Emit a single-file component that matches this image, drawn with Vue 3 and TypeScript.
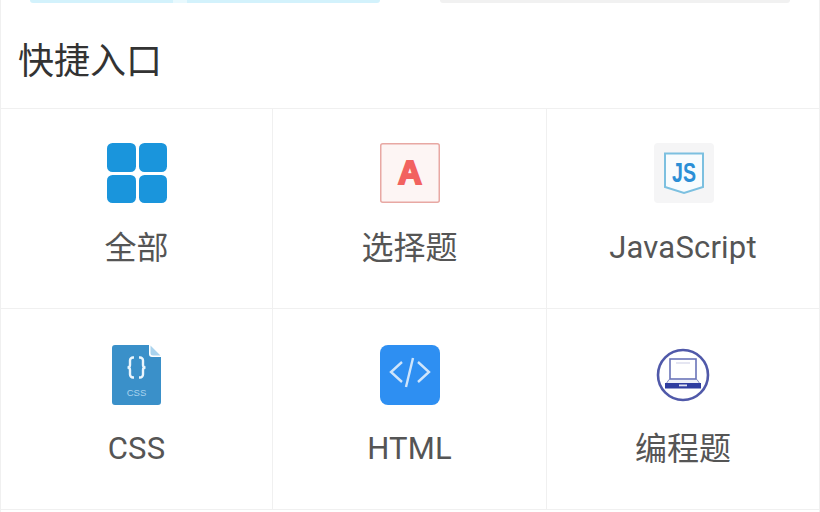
<script setup lang="ts">
const cells = ['全部', '选择题', 'JavaScript', 'CSS', 'HTML', '编程题']
const isLatin = (s: string): boolean => /^[A-Za-z]+$/.test(s)
</script>

<template>
  <div class="page">
    <div class="banners">
      <div class="pill blue"></div>
      <div class="pill gray"></div>
    </div>
    <h2 class="title">快捷入口</h2>
    <div class="grid">
      <div v-for="(label, i) in cells" :key="label" class="cell">
        <div class="icon">
          <svg v-if="i === 0" width="60" height="60" viewBox="0 0 60 60">
            <rect x="0" y="0" width="29" height="29" rx="5.5" fill="#1a95dc" />
            <rect x="32" y="0" width="28" height="29" rx="5.5" fill="#1a95dc" />
            <rect x="0" y="32" width="29" height="28" rx="5.5" fill="#1a95dc" />
            <rect x="32" y="32" width="28" height="28" rx="5.5" fill="#1a95dc" />
          </svg>
          <svg v-else-if="i === 1" width="60" height="60" viewBox="0 0 60 60">
            <rect x="0.75" y="0.75" width="58.5" height="58.5" rx="2" fill="#fdf5f4" stroke="#e8a8a3" stroke-width="1.5" />
            <text x="30" y="41" text-anchor="middle" class="a-letter">A</text>
          </svg>
          <svg v-else-if="i === 2" class="js-icon" width="60" height="60" viewBox="0 0 60 60">
            <rect width="60" height="60" rx="4" fill="#f5f5f6" />
            <path d="M11 10.5H49V44L30 50L11 44Z" fill="#f8fcfe" stroke="#7cc0e0" stroke-width="2" />
            <text transform="translate(30 39) scale(0.7 1)" text-anchor="middle" class="js-letter">JS</text>
          </svg>
          <svg v-else-if="i === 3" width="50" height="60" viewBox="0 0 50 60">
            <path d="M3 0H37V9a3 3 0 0 0 3 3H49V57a3 3 0 0 1-3 3H3a3 3 0 0 1-3-3V3a3 3 0 0 1 3-3Z" fill="#3a90c9" />
            <path d="M38.5 0.5L48.5 10.5H41a2.5 2.5 0 0 1-2.5-2.5Z" fill="#a9d3ee" />
            <path d="M22 12.5h-1a3 3 0 0 0-3 3v4.5a2.5 2.5 0 0 1-2.5 2.5a2.5 2.5 0 0 1 2.5 2.5v4.5a3 3 0 0 0 3 3h1" fill="none" stroke="#eaf5fc" stroke-width="2.4" />
            <path d="M27 12.5h1a3 3 0 0 1 3 3v4.5a2.5 2.5 0 0 0 2.5 2.5a2.5 2.5 0 0 0-2.5 2.5v4.5a3 3 0 0 1-3 3h-1" fill="none" stroke="#eaf5fc" stroke-width="2.4" />
            <text x="24.5" y="51" text-anchor="middle" class="css-small">CSS</text>
          </svg>
          <svg v-else-if="i === 4" width="60" height="60" viewBox="0 0 60 60">
            <rect width="60" height="60" rx="8" fill="#2e8ff2" />
            <path d="M22 17L11 27L22 37M38 17L49 27L38 37" fill="none" stroke="#cfe5fb" stroke-width="2.4" />
            <path d="M33 13L26 42" fill="none" stroke="#cfe5fb" stroke-width="2.4" />
          </svg>
          <svg v-else width="54" height="54" viewBox="0 0 54 54">
            <circle cx="27" cy="27" r="25" fill="#fff" stroke="#5059a9" stroke-width="2.6" />
            <rect x="14" y="11" width="26" height="20" fill="#fff" stroke="#6a74b8" stroke-width="1.6" />
            <path d="M20 15H34" stroke="#d3d6ea" stroke-width="1.2" />
            <path d="M13 31.5H41L44 36H10Z" fill="#eef0f8" stroke="#8890c6" stroke-width="1" />
            <rect x="9" y="35" width="36" height="5.5" fill="#2f3da0" />
            <rect x="23" y="36.5" width="8" height="1.8" fill="#dfe2f3" />
          </svg>
        </div>
        <div class="label" :class="{ latin: isLatin(label) }">{{ label }}</div>
      </div>
    </div>
  </div>
</template>

<style scoped>
.page {
  width: 820px;
  height: 512px;
  box-sizing: border-box;
  border-left: 1px solid #f0f0f0;
  border-right: 1px solid #f0f0f0;
  background: #fff;
  overflow: hidden;
  font-family: Roboto, "Noto Sans CJK SC", sans-serif;
}
.banners {
  display: flex;
  gap: 60px;
  padding: 0 29px;
  height: 3px;
}
.pill {
  flex: 1;
  border-radius: 0 0 12px 12px;
}
.blue {
  background: linear-gradient(90deg, #d3f2fc 0 41%, #e8f9fe 41% 45%, #d3f2fc 45%);
}
.gray {
  background: #f1f1f1;
}
.title {
  margin: 0;
  height: 105px;
  box-sizing: border-box;
  padding: 34px 0 0 17px;
  font-size: 36px;
  line-height: 50px;
  font-weight: 400;
  color: #333;
}
.grid {
  display: grid;
  grid-template-columns: 271px 274px 273px;
  grid-template-rows: 200px 201px;
  border-top: 1px solid #f0f0f0;
}
.cell {
  box-sizing: border-box;
  display: flex;
  flex-direction: column;
  align-items: center;
  padding-top: 34px;
  border-bottom: 1px solid #f0f0f0;
  border-left: 1px solid #f0f0f0;
}
.cell:nth-child(3n + 1) {
  border-left: none;
}
.cell:nth-child(n + 4) {
  padding-top: 36px;
}
.icon {
  height: 60px;
  display: flex;
  align-items: center;
  justify-content: center;
}
.js-icon {
  margin-left: 2px;
}
.label {
  margin-top: 22px;
  font-size: 32px;
  line-height: 46px;
  color: #555;
}
.cell:nth-child(n + 4) .label {
  margin-top: 21px;
}
.latin {
  font-size: 31px;
  letter-spacing: 0.2px;
}
.a-letter {
  font-family: "Liberation Sans", sans-serif;
  font-weight: 700;
  font-size: 33px;
  fill: #f2625f;
  stroke: #f2625f;
  stroke-width: 2px;
}
.js-letter {
  font-family: "Liberation Sans", sans-serif;
  font-weight: 700;
  font-size: 28px;
  fill: #2b8fd6;
}
.css-small {
  font-family: "Liberation Sans", sans-serif;
  font-size: 9.5px;
  fill: #a9d3ee;
}
</style>
